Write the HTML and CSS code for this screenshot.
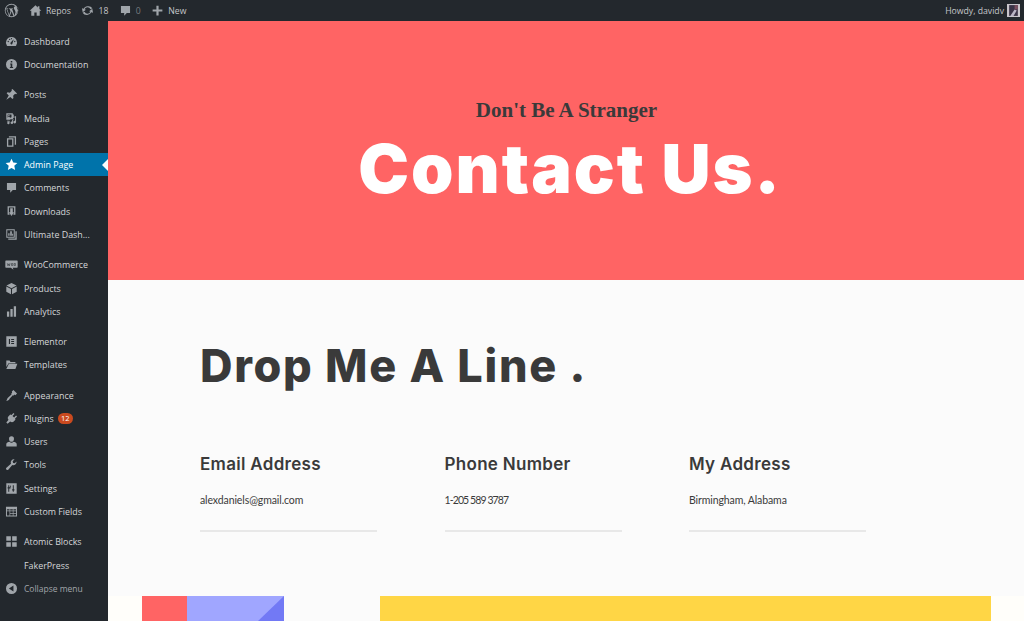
FILE: index.html
```html
<!DOCTYPE html>
<html lang="en">
<head>
  <meta charset="UTF-8" />
  <title>Contact Us</title>
  <link rel="stylesheet" href="styles.css">
</head>
<body>

  <div class="topbar">
    <div class="topbar-left">
      <span class="bar-item wp"><svg class="bar-icon wp-logo" viewBox="0 0 20 20"><path d="M10 1a9 9 0 1 0 0 18 9 9 0 0 0 0-18zm0 1.200c2 0 3.900.8 5.300 2-1.300 0-2.200 1.100-2.200 2.300 0 1 .6 1.900 1.200 2.900.5.800 1 1.900 1 3.400l-1.300 4.300-3.100-9.200.9-.1c.4 0 .4-.7 0-.7l-2.600.1-2.500-.1c-.4 0-.5.700 0 .7l.8.100 1.200 3.200-1.700 5-2.800-8.200.9-.1c.4 0 .4-.7 0-.7l-2.300.1C3.700 3.700 6.700 2.200 10 2.200zM2.900 6.900 6.800 17.500A7.800 7.800 0 0 1 2.900 6.900zM10.200 10.900l2.300 6.400a7.800 7.800 0 0 1-4.700.1zM16.900 6.100a7.800 7.800 0 0 1-.6 9.200l2.200-6.500c.4-1 .5-1.800.5-2.500z" fill-rule="evenodd"/></svg></span>
      <span class="bar-item"><svg class="bar-icon" viewBox="0 0 20 20"><path d="M10 2 1 10.500h2.500V18h4.700v-5h3.600v5h4.700v-7.500H19l-3-2.800V3.500h-2.500v1.900z"/></svg><span class="bar-text">Repos</span></span>
      <span class="bar-item"><svg class="bar-icon" viewBox="0 0 20 20"><path d="M10 3.500c-2.600 0-4.800 1.500-5.800 3.700L1.500 6.500l1.100 6.200 4.900-3.800-2-.7A4.800 4.800 0 0 1 14.500 8l3-1.300A7.500 7.500 0 0 0 10 3.500zm7.400 3.800-4.900 3.800 2 .7A4.800 4.800 0 0 1 5.500 12l-3 1.300a7.500 7.500 0 0 0 13.300-.5l2.700.7z"/></svg><span class="bar-text">18</span></span>
      <span class="bar-item"><svg class="bar-icon" viewBox="0 0 20 20"><path d="M3 3h14v11h-5l-4 4v-4H3z"/></svg><span class="bar-text dim">0</span></span>
      <span class="bar-item"><svg class="bar-icon" viewBox="0 0 20 20"><path d="M8.300 2.500h3.400v5.800h5.800v3.400h-5.800v5.800H8.300v-5.800H2.500V8.300h5.800z"/></svg><span class="bar-text">New</span></span>
    </div>
    <div class="topbar-right">
      <span class="bar-text">Howdy, davidv</span>
      <svg class="avatar" viewBox="0 0 12 12"><rect width="12" height="12" fill="#c9c6cc"/><rect x="2" y="1" width="8" height="10" fill="#3a3346"/><path d="M3 11 7 5l2 1-3 5z" fill="#b9b4c4"/><path d="M7 1h3v4H7z" fill="#7a5060"/></svg>
    </div>
  </div>

  <div class="layout">
    <nav class="sidebar">
      <div class="menu-group">
        <a class="menu-item"><svg class="menu-icon" viewBox="0 0 20 20"><path fill-rule="evenodd" d="M10 3a8.500 8.500 0 0 0-7 13.400l.5.600h13l.5-.6A8.500 8.500 0 0 0 10 3zM5 11a1 1 0 1 1 0-2 1 1 0 0 1 0 2zm2.200-3.200a1 1 0 1 1 0-2 1 1 0 0 1 0 2zM10 6.600a1 1 0 1 1 0-2 1 1 0 0 1 0 2zm1.300 7.200a1.700 1.700 0 0 1-2.900-1.700c.3-.5 5-5.500 5-5.500s-1.800 6.600-2.100 7.200zM15 11a1 1 0 1 1 0-2 1 1 0 0 1 0 2z"/></svg>Dashboard</a>
        <a class="menu-item"><svg class="menu-icon" viewBox="0 0 20 20"><path fill-rule="evenodd" d="M10 1.500a8.500 8.500 0 1 0 0 17 8.500 8.500 0 0 0 0-17zM11.200 4.500v2.400H8.800V4.500zM8 8.500h3.200v5.500H12.500v1.500h-5V14h1.200v-4H8z"/></svg>Documentation</a>
      </div>
      <div class="menu-group">
        <a class="menu-item"><svg class="menu-icon" viewBox="0 0 20 20"><path d="M11.500 1.500 18.500 8.500l-1.500 1-1.500-.5-3 3 .5 3.500-1.500 1.500-3.300-3.300L2 18l3.800-6.500L2.500 8.200 4 6.700l3.500.5 3-3-.5-1.500z"/></svg>Posts</a>
        <a class="menu-item"><svg class="menu-icon" viewBox="0 0 20 20"><path fill-rule="evenodd" d="M2 2h10v2h1.500v7H8v1H2zM4 4v5l2-2 2 2 2-1V4zM7 5.500a1 1 0 1 0 0 .01zM17 6v9.500a2 2 0 1 1-1.500-1.900V8l-3 .8V16.500a2 2 0 1 1-1.500-1.900V12h2.500V7.500zM3 13.500h4V17a1.800 1.800 0 1 1-1.300-1.700V14.800H3z"/></svg>Media</a>
        <a class="menu-item"><svg class="menu-icon" viewBox="0 0 20 20"><path fill-rule="evenodd" d="M6 2h11v13h-2V4H6zM3 5h10v13H3zM5 7v9h6V7z"/></svg>Pages</a>
        <a class="menu-item active"><svg class="menu-icon" viewBox="0 0 20 20"><path d="m10 1 2.700 6 6.300.7-4.700 4.300 1.300 6.500L10 15.200l-5.600 3.300L5.700 12 1 7.700 7.300 7z"/></svg>Admin Page</a>
        <a class="menu-item"><svg class="menu-icon" viewBox="0 0 20 20"><path d="M3 3h14v11h-5l-4 4v-4H3z"/></svg>Comments</a>
        <a class="menu-item"><svg class="menu-icon" viewBox="0 0 20 20"><path fill-rule="evenodd" d="M4 2h12v13h-3v-2h1V4H6v9h1v2H4zM8 5h4v6h2l-4 6-4-6h2z"/></svg>Downloads</a>
        <a class="menu-item"><svg class="menu-icon" viewBox="0 0 20 20"><path fill-rule="evenodd" d="M2 2h13v13H2zM3.500 3.500v10h10v-10zM5 12V8h2v4zM8 12V5h2.500v7zM11 12V9h1.500v3zM16 5h2v13H5v-2h11z"/></svg>Ultimate Dash...</a>
      </div>
      <div class="menu-group">
        <a class="menu-item"><svg class="menu-icon woo" viewBox="0 0 20 20"><path d="M1.500 4h17a1 1 0 0 1 1 1v9a1 1 0 0 1-1 1H12l1 3-4-3H1.500a1 1 0 0 1-1-1V5a1 1 0 0 1 1-1z"/><path d="M3.500 8l1 4 1.300-3 1 3 1-4M10 8.500h2v3h-2zM14 8.500h2v3h-2z" fill="none" stroke="#23282d" stroke-width=".8"/></svg>WooCommerce</a>
        <a class="menu-item"><svg class="menu-icon" viewBox="0 0 20 20"><path d="M10 1.500 17.800 5.500 10 9.500 2.200 5.500zM2 7l7.200 3.700V19L2 15zM18 7v8l-7.200 4v-8.300z"/></svg>Products</a>
        <a class="menu-item"><svg class="menu-icon" viewBox="0 0 20 20"><path d="M3 10h3.500v8H3zM8.300 6h3.500v12H8.300zM13.500 2H17v16h-3.500z"/></svg>Analytics</a>
      </div>
      <div class="menu-group">
        <a class="menu-item"><svg class="menu-icon" viewBox="0 0 20 20"><path fill-rule="evenodd" d="M2 2h16v16H2zM6 6v8h1.700V6zM9.500 6v1.600H14V6zM9.500 9.200v1.600H14V9.200zM9.500 12.400V14H14v-1.600z"/></svg>Elementor</a>
        <a class="menu-item"><svg class="menu-icon" viewBox="0 0 20 20"><path d="M2 4h5l1.500 2H16v2H5.500L2 14zM6 9h13l-3 8H2z"/></svg>Templates</a>
      </div>
      <div class="menu-group">
        <a class="menu-item"><svg class="menu-icon" viewBox="0 0 20 20"><path d="M13 1.500 18.500 7l-2.500 2.500-1.500-1-1 1.500-1.500-.5L7 15c-.5 2-3 3.500-5 3.500 1-1 1-3.500 2.500-5l5.500-5-.5-1.500L11 6l-.5-2z"/></svg>Appearance</a>
        <a class="menu-item"><svg class="menu-icon" viewBox="0 0 20 20"><path d="M13 1.500l1.500 1.500-3 3 2.500 2.500 3-3L18.500 7l-3 3 .5 2-3.500 3.500c-2 .5-3.500 0-4.500-1L4 18l-2-2 3.500-4c-1-1-1.500-2.500-1-4.500L8 4l2 .5z"/></svg>Plugins<span class="badge">12</span></a>
        <a class="menu-item"><svg class="menu-icon" viewBox="0 0 20 20"><path d="M10 2a3.800 3.800 0 0 1 3.800 4c0 2.500-1.700 4.500-3.800 4.500S6.200 8.500 6.200 6A3.800 3.800 0 0 1 10 2zM7 10.500c.8.800 1.900 1.500 3 1.500s2.200-.7 3-1.500c2.500.5 5 1.500 5 3.500v3.500H2V14c0-2 2.500-3 5-3.500z"/></svg>Users</a>
        <a class="menu-item"><svg class="menu-icon" viewBox="0 0 20 20"><path d="M17.800 5.500a5 5 0 0 1-6.600 5.200L5 18c-1 .8-2.300.5-3-.3-.7-.8-.6-2 .2-2.800l7-6A5 5 0 0 1 14.800 2l-3 3 .7 2.500 2.400.7z"/></svg>Tools</a>
        <a class="menu-item"><svg class="menu-icon" viewBox="0 0 20 20"><path fill-rule="evenodd" d="M2 2h16v16H2zM5 5v3H4v2h1v5h1.500v-5h1V8h-1V5zM12 5v6h-1v2h1v2h1.500v-2h1v-2h-1V5zM8.500 5l1 2h-1v3h-1V7z"/></svg>Settings</a>
        <a class="menu-item"><svg class="menu-icon" viewBox="0 0 20 20"><path fill-rule="evenodd" d="M1.500 2.500h17v15h-17zM3 6.500v2h4v-2zM8 6.500v2h4v-2zM13 6.500v2h4v-2zM3 9.800V16h4V9.800zM8 9.800v2.600h4V9.800zM13 9.800v2.600h4V9.800zM8 13.500V16h4v-2.500zM13 13.500V16h4v-2.500z"/></svg>Custom Fields</a>
      </div>
      <div class="menu-group">
        <a class="menu-item"><svg class="menu-icon" viewBox="0 0 20 20"><path d="M2 2h7v7H2zM11 2h7v7h-7zM2 11h7v7H2zM11 11h7v7h-7z"/></svg>Atomic Blocks</a>
        <a class="menu-item"><span class="menu-icon"></span>FakerPress</a>
        <a class="menu-item collapse"><svg class="menu-icon" viewBox="0 0 20 20"><path fill-rule="evenodd" d="M10 1.500a8.500 8.500 0 1 0 0 17 8.500 8.500 0 0 0 0-17zM13 5.500v9L6 10z"/></svg>Collapse menu</a>
      </div>
    </nav>

    <main class="content">
      <header class="hero">
        <p class="hero-kicker">Don't Be A Stranger</p>
        <h1 class="hero-title">Contact Us.</h1>
      </header>

      <section class="contact">
        <h2 class="contact-title">Drop Me A Line .</h2>
        <div class="contact-cols">
          <div class="contact-col">
            <h3>Email Address</h3>
            <p>alexdaniels@gmail.com</p>
          </div>
          <div class="contact-col">
            <h3>Phone Number</h3>
            <p class="phone">1-205 589 3787</p>
          </div>
          <div class="contact-col">
            <h3>My Address</h3>
            <p>Birmingham, Alabama</p>
          </div>
        </div>
      </section>

      <div class="strip">
        <div class="strip-art">
          <div class="art-red"></div>
          <svg class="art-blue" viewBox="0 0 97 25" preserveAspectRatio="none"><rect width="97" height="25" fill="#a0a6ff"/><path d="M97 0V25H71z" fill="#7279f5"/></svg>
        </div>
        <div class="strip-yellow"></div>
      </div>
    </main>
  </div>

</body>
</html>
```

FILE: styles.css
```css
html, body {
  margin: 0;
  padding: 0;
  height: 621px;
  overflow: hidden;
  background: #fbfbfb;
  font-family: "Open Sans", "Noto Sans", sans-serif;
}

/* top admin bar */
.topbar {
  height: 21px;
  background: #23282d;
  display: flex;
  justify-content: space-between;
  align-items: center;
  color: #c3c6c9;
  font-size: 8.700px;
}

.topbar-left {
  display: flex;
  align-items: center;
  padding-left: 4px;
}

.bar-item {
  display: flex;
  align-items: center;
  gap: 4px;
  margin-right: 10.500px;
}

.bar-item.wp { margin-right: 10px; }

.bar-icon {
  width: 13px;
  height: 13px;
  fill: #a0a5aa;
}

.wp-logo { width: 15px; height: 15px; }

.bar-text.dim { color: #777c80; }

.topbar-right {
  display: flex;
  align-items: center;
  gap: 3px;
  padding-right: 4px;
}

.avatar { width: 13px; height: 13px; }

/* sidebar menu */
.layout {
  display: flex;
  height: 600px;
}

.sidebar {
  width: 108px;
  flex: none;
  background: #23282d;
  padding-top: 8.700px;
  box-sizing: border-box;
}

.menu-group { margin-bottom: 7.100px; }

.menu-item {
  position: relative;
  display: flex;
  align-items: center;
  height: 23.250px;
  color: #d5d7d9;
  font-size: 8.900px;
  white-space: nowrap;
}

.menu-icon {
  width: 13px;
  height: 13px;
  flex: none;
  margin: 0 6px 0 5px;
  fill: #a0a5aa;
}

.menu-icon.woo { width: 15px; margin: 0 5px 0 4px; }

.menu-item.active {
  background: #0073aa;
  color: #fff;
}

.menu-item.active .menu-icon { fill: #fff; }

.menu-item.active::after {
  content: "";
  position: absolute;
  right: 0;
  top: 6px;
  border: 6px solid transparent;
  border-right-color: #fbfbfb;
  border-left-width: 0;
}

.menu-item.collapse { color: #a0a5aa; font-size: 8.500px; }

.badge {
  margin-left: 4px;
  width: 15px;
  height: 11px;
  line-height: 11px;
  border-radius: 6px;
  background: #ca4a1f;
  color: #fff;
  font-size: 7.500px;
  text-align: center;
}

/* page content */
.content {
  flex: 1;
  min-width: 0;
  display: flex;
  flex-direction: column;
}

.hero {
  height: 259px;
  flex: none;
  background: #ff6464;
  display: flex;
  flex-direction: column;
  align-items: center;
  text-align: center;
  box-sizing: border-box;
  padding: 76px 0 0 1px;
}

.hero-kicker {
  margin: 0;
  font-family: "Liberation Serif", serif;
  font-weight: 700;
  font-size: 21px;
  line-height: 26px;
  color: #3a3a3a;
}

.hero-title {
  margin: 14px 0 0 7px;
  font-family: Inter, sans-serif;
  font-weight: 900;
  font-size: 68px;
  line-height: 62px;
  letter-spacing: 2px;
  color: #fff;
}

.contact {
  height: 316px;
  flex: none;
  box-sizing: border-box;
  padding: 56px 0 0 92px;
  background: #fbfbfb;
  color: #3a3a3a;
}

.contact-title {
  margin: 0;
  font-family: Inter, sans-serif;
  font-weight: 800;
  font-size: 45px;
  line-height: 60px;
  letter-spacing: 1.700px;
}

.contact-cols {
  display: flex;
  gap: 67.500px;
  margin-top: 58px;
}

.contact-col {
  width: 177px;
  height: 76px;
  border-bottom: 2px solid #e8e8e8;
}

.contact-col h3 {
  margin: 0;
  font-family: Inter, sans-serif;
  font-weight: 600;
  font-size: 17px;
  line-height: 20px;
  letter-spacing: .3px;
}

.contact-col p {
  margin: 19px 0 0;
  font-family: Lato, sans-serif;
  font-size: 10.500px;
  line-height: 14px;
  letter-spacing: -.1px;
}

.contact-col p.phone { letter-spacing: -.9px; }

.strip {
  flex: 1;
  display: flex;
  background: #fffefa;
  padding-left: 34px;
  padding-right: 33px;
}

.strip-art {
  display: flex;
  width: 238px;
  background: #fbfbfb;
  flex: none;
}

.art-red {
  width: 45px;
  background: #ff6464;
}

.art-blue {
  display: block;
  width: 97px;
  height: 25px;
}

.strip-yellow {
  flex: 1;
  background: #ffd645;
}
```
